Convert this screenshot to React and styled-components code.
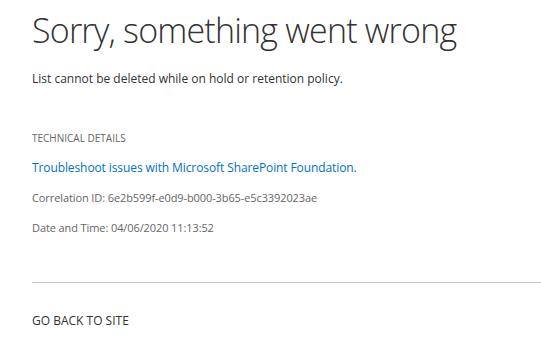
import React from "react";
import styled, { createGlobalStyle } from "styled-components";

const Global = createGlobalStyle`
  html, body { margin: 0; padding: 0; background: #fff; }
  body { font-family: "Open Sans", "Noto Sans", sans-serif; color: #333; }
`;

const Page = styled.main`
  padding: 8px 0 0 32px;
`;

const Title = styled.h1`
  margin: 0;
  font-family: "Open Sans", sans-serif;
  font-weight: 300;
  font-size: 34px;
  line-height: 44px;
  color: #333;
  letter-spacing: -0.8px;
`;

const Message = styled.p`
  margin: 18px 0 0;
  font-size: 12px;
  line-height: 18px;
  color: #333;
`;

const Details = styled.section`
  margin-top: 41px;
  display: flex;
  flex-direction: column;
  gap: 12px;
`;

const Label = styled.div`
  font-size: 10px;
  line-height: 18px;
  color: #666;
  text-transform: uppercase;
`;

const Line = styled.div`
  font-size: ${(p) => (p.$small ? "11px" : "12px")};
  line-height: 18px;
  color: ${(p) => (p.$small ? "#666" : "#333")};
  letter-spacing: -0.1px;
`;

const Link = styled.a`
  color: #0072c6;
  text-decoration: none;
`;

const Rule = styled.hr`
  margin: 45px 0 0;
  border: 0;
  border-top: 1px solid #c8c8c8;
`;

const Back = styled.a`
  display: block;
  margin-top: 29px;
  font-size: 12px;
  line-height: 18px;
  color: #333;
  text-decoration: none;
  text-transform: uppercase;
`;

export default function App() {
  return (
    <>
      <Global />
      <Page>
        <Title>Sorry, something went wrong</Title>
        <Message>List cannot be deleted while on hold or retention policy.</Message>
        <Details>
          <Label>Technical Details</Label>
          <Line>
            <Link href="#">Troubleshoot issues with Microsoft SharePoint Foundation.</Link>
          </Line>
          <Line $small>Correlation ID: 6e2b599f-e0d9-b000-3b65-e5c3392023ae</Line>
          <Line $small>Date and Time: 04/06/2020 11:13:52</Line>
        </Details>
        <Rule />
        <Back href="#">Go back to site</Back>
      </Page>
    </>
  );
}
